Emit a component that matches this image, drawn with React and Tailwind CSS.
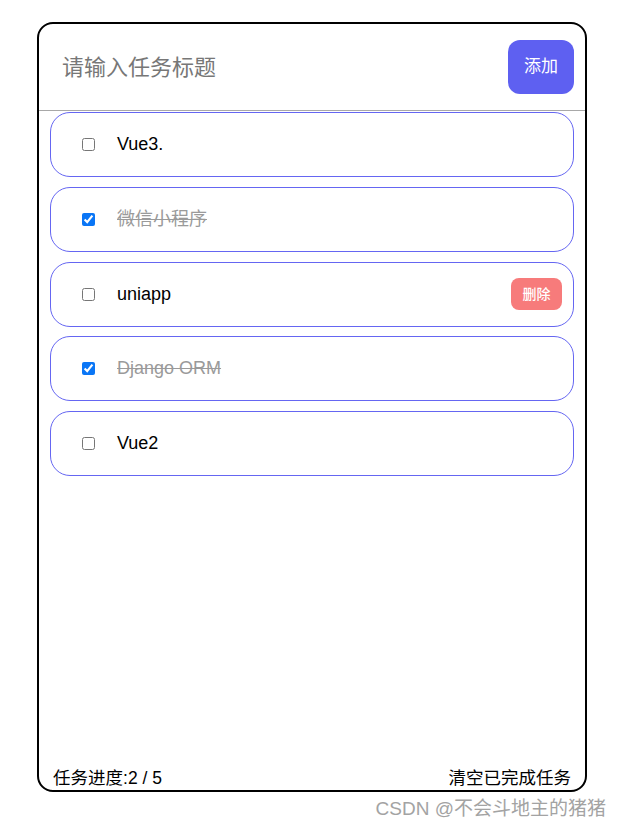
import React, { useState } from "react";

const initialTodos = [
  { id: 1, title: "Vue3.", done: false },
  { id: 2, title: "微信小程序", done: true },
  { id: 3, title: "uniapp", done: false, hover: true },
  { id: 4, title: "Django ORM", done: true },
  { id: 5, title: "Vue2", done: false },
];

const font = { fontFamily: '"Liberation Sans", "Noto Sans CJK SC", sans-serif' };

function TodoItem({ todo, onToggle, onRemove }) {
  return (
    <li className="flex h-[65px] items-center rounded-[20px] border border-[#6566f2] pl-[31px] pr-[11px]">
      <input
        type="checkbox"
        checked={todo.done}
        onChange={() => onToggle(todo.id)}
        className="h-[13px] w-[13px] accent-[#0a76f6]"
      />
      <span
        className={
          "ml-[22px] flex-1 text-[18px] " +
          (todo.done ? "text-[#9a9a9a] line-through" : "text-black")
        }
      >
        {todo.title}
      </span>
      {todo.hover && (
        <button
          onClick={() => onRemove(todo.id)}
          className="h-[32px] w-[51px] rounded-[8px] bg-[#f77b7b] text-[14px] font-medium text-white"
        >
          删除
        </button>
      )}
    </li>
  );
}

export default function App() {
  const [todos, setTodos] = useState(initialTodos);
  const [title, setTitle] = useState("");

  const toggle = (id) =>
    setTodos((list) => list.map((t) => (t.id === id ? { ...t, done: !t.done } : t)));
  const remove = (id) => setTodos((list) => list.filter((t) => t.id !== id));
  const add = () => {
    if (!title.trim()) return;
    setTodos((list) => [...list, { id: Date.now(), title: title.trim(), done: false }]);
    setTitle("");
  };
  const clearDone = () => setTodos((list) => list.filter((t) => !t.done));
  const doneCount = todos.filter((t) => t.done).length;

  return (
    <div className="min-h-[826px] bg-white" style={font}>
      <div className="ml-[37px] pt-[22px]">
        <div className="flex h-[770px] w-[550px] flex-col rounded-[16px] border-2 border-black">
          <header className="flex h-[87px] shrink-0 items-center border-b border-[#a8a8a8] pl-[23px] pr-[11px]">
            <input
              value={title}
              onChange={(e) => setTitle(e.target.value)}
              placeholder="请输入任务标题"
              className="flex-1 bg-transparent text-[22px] text-black outline-none placeholder:text-[#777777]"
            />
            <button
              onClick={add}
              className="h-[54px] w-[66px] rounded-[12px] bg-[#5e60f1] text-[17px] text-white"
            >
              添加
            </button>
          </header>
          <ul className="flex flex-1 flex-col gap-[9.75px] pl-[11px] pr-[11px] pt-[1px]">
            {todos.map((todo) => (
              <TodoItem key={todo.id} todo={todo} onToggle={toggle} onRemove={remove} />
            ))}
          </ul>
          <footer className="flex h-[24px] shrink-0 items-center justify-between px-[14px] text-[17.5px] text-black">
            <span>
              任务进度:{doneCount}&nbsp;/&nbsp;{todos.length}
            </span>
            <button onClick={clearDone} className="text-[17.5px] text-black">
              清空已完成任务
            </button>
          </footer>
        </div>
      </div>
      <div className="mt-[4px] pr-[16px] text-right text-[19px] leading-[26px] text-[#a3a3a3]">
        CSDN @不会斗地主的猪猪
      </div>
    </div>
  );
}
